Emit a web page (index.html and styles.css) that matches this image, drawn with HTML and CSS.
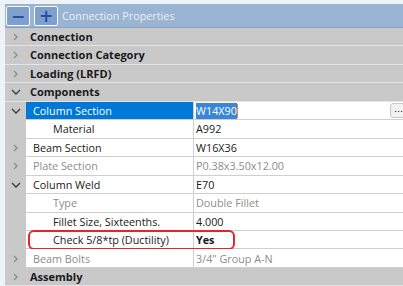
FILE: index.html
```html
<!DOCTYPE html>
<html lang="en">
  <head>
    <meta charset="UTF-8" />
    <title>Connection Properties</title>
    <link rel="stylesheet" href="styles.css">
  </head>
  <body>
    <div class="panel">
      <!-- Toolbar -->
      <div class="toolbar">
        <button class="tool-btn">&minus;</button>
        <button class="tool-btn">+</button>
        <span class="toolbar-title">Connection Properties</span>
      </div>

      <!-- Property grid -->
      <div class="grid">
        <div class="row cat">
          <span class="gutter"><svg class="chev" width="8" height="8"><polyline points="2,1 5,4 2,7"/></svg></span>
          <span class="cat-name">Connection</span>
        </div>
        <div class="row cat">
          <span class="gutter"><svg class="chev" width="8" height="8"><polyline points="2,1 5,4 2,7"/></svg></span>
          <span class="cat-name">Connection Category</span>
        </div>
        <div class="row cat">
          <span class="gutter"><svg class="chev" width="8" height="8"><polyline points="2,1 5,4 2,7"/></svg></span>
          <span class="cat-name">Loading (LRFD)</span>
        </div>
        <div class="row cat">
          <span class="gutter"><svg class="chev open" width="10" height="8"><polyline points="1,2 5,6 9,2"/></svg></span>
          <span class="cat-name">Components</span>
        </div>

        <div class="row prop selected">
          <span class="gutter"><svg class="chev open" width="10" height="8"><polyline points="1,2 5,6 9,2"/></svg></span>
          <span class="name">Column Section</span>
          <span class="value"><span class="sel-text">W14X90</span><span class="caret"></span><button class="more-btn">...</button></span>
        </div>
        <div class="row prop">
          <span class="gutter"></span>
          <span class="name sub">Material</span>
          <span class="value">A992</span>
        </div>
        <div class="row prop">
          <span class="gutter"><svg class="chev" width="8" height="8"><polyline points="2,1 5,4 2,7"/></svg></span>
          <span class="name">Beam Section</span>
          <span class="value">W16X36</span>
        </div>
        <div class="row prop muted">
          <span class="gutter"><svg class="chev" width="8" height="8"><polyline points="2,1 5,4 2,7"/></svg></span>
          <span class="name">Plate Section</span>
          <span class="value">P0.38x3.50x12.00</span>
        </div>
        <div class="row prop">
          <span class="gutter"><svg class="chev open" width="10" height="8"><polyline points="1,2 5,6 9,2"/></svg></span>
          <span class="name">Column Weld</span>
          <span class="value">E70</span>
        </div>
        <div class="row prop muted">
          <span class="gutter"></span>
          <span class="name sub">Type</span>
          <span class="value">Double Fillet</span>
        </div>
        <div class="row prop">
          <span class="gutter"></span>
          <span class="name sub">Fillet Size, Sixteenths.</span>
          <span class="value">4.000</span>
        </div>
        <div class="row prop marked">
          <span class="gutter"></span>
          <span class="name sub">Check 5/8*tp (Ductility)</span>
          <span class="value bold">Yes</span>
          <span class="highlight-box"></span>
        </div>
        <div class="row prop muted">
          <span class="gutter"><svg class="chev" width="8" height="8"><polyline points="2,1 5,4 2,7"/></svg></span>
          <span class="name">Beam Bolts</span>
          <span class="value">3/4" Group A-N</span>
        </div>

        <div class="row cat">
          <span class="gutter"><svg class="chev" width="8" height="8"><polyline points="2,1 5,4 2,7"/></svg></span>
          <span class="cat-name">Assembly</span>
        </div>
      </div>
    </div>
  </body>
</html>
```

FILE: styles.css
```css
/* Page */
body {
  margin: 0;
  background: #eef2f9;
  font-family: "Open Sans", "Noto Sans", sans-serif;
  font-size: 10.8px;
  color: #1a1a1a;
  overflow: hidden;
}

.panel {
  padding: 4px 0 0 5px;
}

/* Toolbar */
.toolbar {
  display: flex;
  align-items: center;
  gap: 4px;
  height: 23px;
  padding-left: 1px;
  background: #9ab5d3;
  border-bottom: 1px solid #8aa2bd;
}

.tool-btn {
  width: 24px;
  height: 20px;
  padding: 0;
  border: 1.5px solid #ffffff;
  border-radius: 2px;
  background: #7f9fcf;
  color: #28509d;
  font-family: "DejaVu Sans", sans-serif;
  font-size: 17px;
  font-weight: bold;
  line-height: 16px;
}

.toolbar-title {
  color: #e9eff7;
}

/* Grid rows */
.row {
  position: relative;
  display: flex;
  height: 18.46px;
  box-sizing: border-box;
  align-items: stretch;
}

.gutter {
  flex: none;
  width: 21px;
  display: flex;
  align-items: center;
  justify-content: center;
  background: #c9c9c9;
}

.chev {
  fill: none;
  stroke: #8a8a8a;
  stroke-width: 1.3;
}

.chev.open {
  stroke: #3a3a3a;
}

/* Category rows */
.cat {
  background: #c9c9c9;
  border-bottom: 1px solid #e4e4e4;
}

.cat-name {
  padding-left: 4px;
  font-size: 11px;
  font-weight: bold;
  line-height: 17px;
}

/* Property rows */
.prop .name,
.prop .value {
  display: flex;
  align-items: center;
  background: #ffffff;
  border-bottom: 1px solid #cfcfcf;
  white-space: nowrap;
}

.prop .name {
  flex: none;
  width: 168px;
  box-sizing: border-box;
  padding-left: 7px;
  border-right: 1px solid #cfcfcf;
}

.prop .name.sub {
  padding-left: 27px;
}

.prop .value {
  flex: 1;
  position: relative;
  padding-left: 2px;
}

.muted .name,
.muted .value {
  color: #8c8c8c;
}

.bold {
  font-weight: bold;
}

/* Selected row */
.selected .name {
  background: #0078d7;
  color: #ffffff;
}

.sel-text {
  background: #3a86d6;
  color: #ffffff;
  line-height: 16px;
}

.caret {
  width: 1px;
  height: 14px;
  background: #e08a3c;
}

.more-btn {
  position: absolute;
  right: -4px;
  top: 1px;
  width: 17px;
  height: 15px;
  padding: 0 0 4px;
  border: 1px solid #c8c8c8;
  border-radius: 3px;
  background: #f2f2f2;
  font-size: 11px;
  line-height: 8px;
  color: #333333;
}

/* Red marker over the ductility row */
.highlight-box {
  position: absolute;
  left: 23px;
  top: -1px;
  width: 207px;
  height: 20px;
  box-sizing: border-box;
  border: 2px solid #e3262e;
  border-radius: 6px;
}
```
